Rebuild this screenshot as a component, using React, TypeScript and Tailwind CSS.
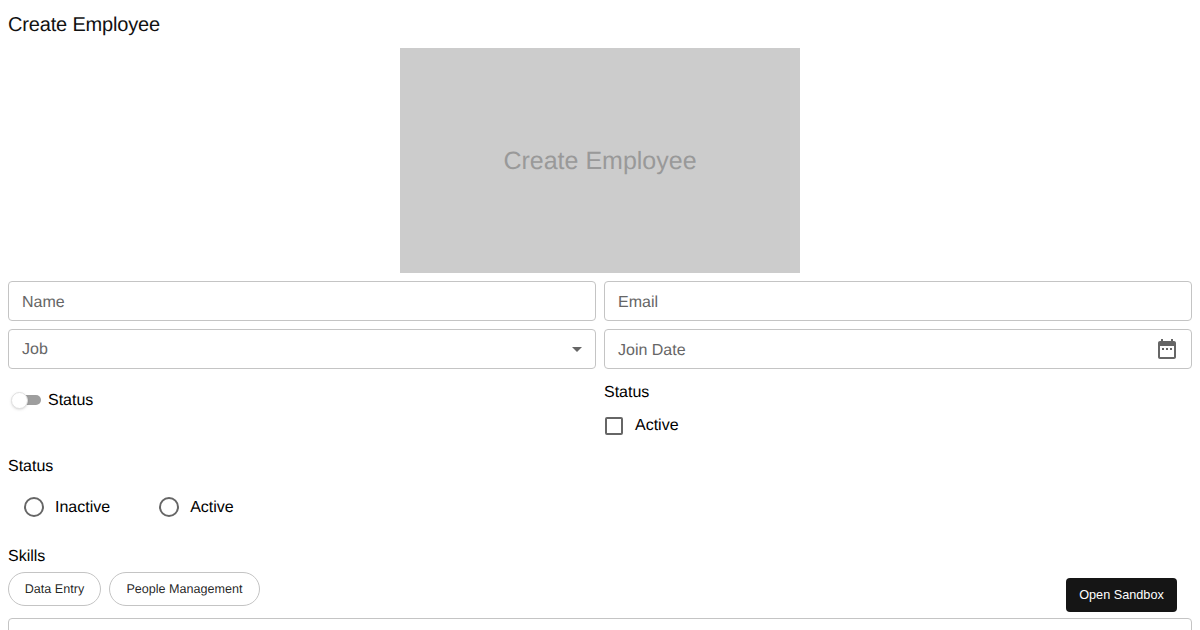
import { useState } from "react";

const font = "font-['Liberation_Sans',Arial,sans-serif] [text-rendering:geometricPrecision]";

function TextBox({ label, children, nudge = true }: { label: string; children?: React.ReactNode; nudge?: boolean }) {
  return (
    <div className="flex h-10 items-center justify-between rounded border border-[#c4c4c4] pl-[13px] pr-3">
      <span className={nudge ? "mt-[3px] text-base text-[#666666]" : "mt-[1px] text-base text-[#666666]"}>{label}</span>
      {children}
    </div>
  );
}

function Radio({ label }: { label: string }) {
  return (
    <label className="flex items-start gap-[11px]">
      <span className="h-5 w-5 rounded-full border-2 border-[#666666]" />
      <span className="-mt-[1px] text-base text-black">{label}</span>
    </label>
  );
}

function Chip({ label, width }: { label: string; width: string }) {
  return (
    <div className={`flex h-[34px] items-center justify-center rounded-full border border-[#c4c4c4] text-[12.6px] text-[rgba(0,0,0,0.87)] ${width}`}>
      {label}
    </div>
  );
}

export default function App() {
  const [active, setActive] = useState(false);

  return (
    <div className={`${font} relative h-[630px] overflow-hidden bg-white px-2`}>
      <h1 className="flex h-12 items-center pt-[1px] text-xl font-normal tracking-[-0.17px] text-[#111111]">Create Employee</h1>

      <div className="mx-auto flex h-[225px] w-[400px] items-center justify-center bg-[#cccccc] pt-[3px] text-[25px] text-[#999999]">
        Create Employee
      </div>

      <form className="mt-2 grid grid-cols-2 gap-x-2 gap-y-2">
        <TextBox label="Name" />
        <TextBox label="Email" />
        <TextBox label="Job" nudge={false}>
          <svg width="24" height="24" viewBox="0 0 24 24" className="mr-[-6px] fill-[#666666]">
            <path d="M7 10l5 5 5-5z" />
          </svg>
        </TextBox>
        <TextBox label="Join Date">
          <svg width="24" height="24" viewBox="0 0 24 24" className="fill-[#666666]">
            <path d="M9 11H7v2h2v-2zm4 0h-2v2h2v-2zm4 0h-2v2h2v-2zm2-7h-1V2h-2v2H8V2H6v2H5c-1.11 0-1.99.9-1.99 2L3 20c0 1.1.89 2 2 2h14c1.1 0 2-.9 2-2V6c0-1.1-.9-2-2-2zm0 16H5V9h14v11z" />
          </svg>
        </TextBox>

        <div className="flex h-[78px] items-start pt-[13px]">
          <button
            type="button"
            onClick={() => setActive(!active)}
            className="relative ml-[3px] h-5 w-[37px]"
            aria-label="Status"
          >
            <span className="absolute left-[15px] top-[5px] h-[10px] w-[15px] rounded-r-full bg-[#9e9e9e]" />
            <span className="absolute left-0 top-[2px] h-[17px] w-[17px] rounded-full border border-[#e0e0e0] bg-white shadow-sm" />
          </button>
          <span className="mt-[1px] text-base leading-5 text-black">Status</span>
        </div>

        <div className="h-[78px] pt-[6px]">
          <p className="text-base leading-5 text-black">Status</p>
          <label className="mt-[13px] flex items-center">
            <span className="ml-[1px] h-[18px] w-[18px] rounded-[2px] border-2 border-[#666666]" />
            <span className="ml-3 text-base leading-5 text-black">Active</span>
          </label>
        </div>
      </form>

      <section className="mt-[2px]">
        <p className="text-base leading-5 text-black">Status</p>
        <div className="mt-[20px] flex items-start gap-[49px] pl-4">
          <Radio label="Inactive" />
          <Radio label="Active" />
        </div>
      </section>

      <section className="mt-[27px]">
        <p className="text-base leading-5 text-black">Skills</p>
        <div className="mt-[5px] flex gap-2">
          <Chip label="Data Entry" width="w-[93px]" />
          <Chip label="People Management" width="w-[151px]" />
        </div>
        <div className="mt-3 h-10 rounded border border-[#c4c4c4]" />
      </section>

      <button
        type="button"
        className="absolute bottom-[18px] right-[23px] flex h-[34px] w-[111px] items-center justify-center rounded bg-[#151515] pt-[1px] text-[12.7px] text-white"
      >
        Open Sandbox
      </button>
    </div>
  );
}
